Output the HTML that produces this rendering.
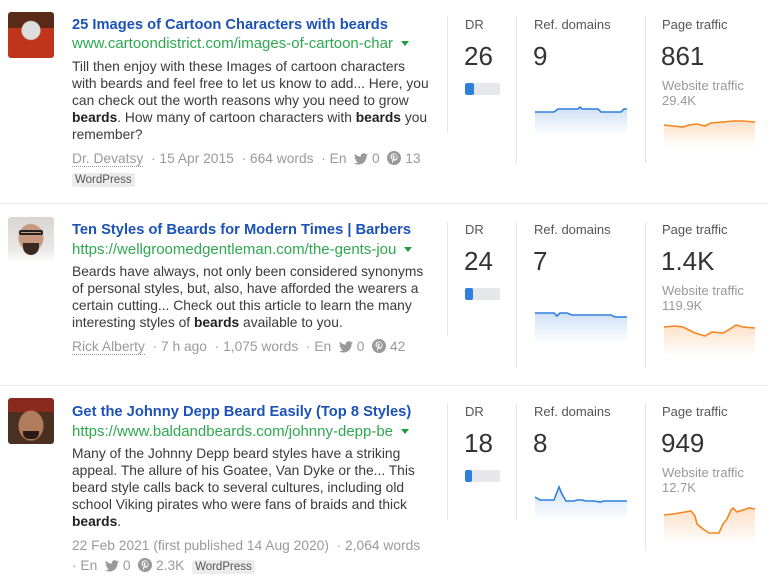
<!DOCTYPE html>
<html><head><meta charset="utf-8">
<style>
*{margin:0;padding:0;box-sizing:border-box}
body{width:768px;height:582px;background:#fff;position:relative;overflow:hidden;font-family:"Liberation Sans",Arial,sans-serif;color:#333}
.a{position:absolute;white-space:nowrap}
.t{font-size:14.7px;font-weight:bold;color:#1d53b6}
.u{font-size:15px;color:#2ea84f}
.u i{display:inline-block;width:0;height:0;border-left:4px solid transparent;border-right:4px solid transparent;border-top:5px solid #1f9a40;margin-left:8px;vertical-align:2px}
.p{font-size:13.8px;line-height:17px;color:#3a3a3a}
.p b{color:#222}
.m{font-size:13.8px;color:#9a9a9a}
.m .au{border-bottom:1px dotted #999}
.tag{display:inline-block;background:#ececec;color:#555;font-size:11.5px;padding:1px 3px;border-radius:2px}
.lbl{font-size:13px;color:#555}
.num{font-size:26px;color:#333}
.wt{font-size:13px;color:#999;line-height:15px}
.vl{position:absolute;width:1px;background:#e6e6e6}
.hl{position:absolute;left:0;width:768px;height:1px;background:#e8e8e8}
.bar{position:absolute;width:35px;height:12px;background:#e6e7ea;border-radius:2px;overflow:hidden}
.bar div{width:8px;height:12px;background:#2f7fde;border-radius:2px}
.av{position:absolute;width:46px;height:46px;border-radius:3px;overflow:hidden}
svg.ic{vertical-align:-2px}
</style></head><body>

<svg width="0" height="0" style="position:absolute"><defs><linearGradient id="gb" x1="0" y1="0" x2="0" y2="1"><stop offset="0" stop-color="#cfe0f5"/><stop offset="1" stop-color="#fff"/></linearGradient><linearGradient id="go" x1="0" y1="0" x2="0" y2="1"><stop offset="0" stop-color="#fde0c8"/><stop offset="1" stop-color="#fff"/></linearGradient></defs></svg>

<!-- Row 1 -->
<div class="av" style="left:8px;top:12px;background:radial-gradient(circle at 50% 40%,#ddd 0 9px,transparent 10px),linear-gradient(#5a2a18 0 35%,#c0341c 35% 100%)"></div>
<div class="a t" style="left:72px;top:17px">25 Images of Cartoon Characters with beards</div>
<div class="a u" style="left:72px;top:35px">www.cartoondistrict.com/images-of-cartoon-char<i></i></div>
<div class="a p" style="left:72px;top:58px">Till then enjoy with these Images of cartoon characters<br>with beards and feel free to let us know to add... Here, you<br>can check out the worth reasons why you need to grow<br><b>beards</b>. How many of cartoon characters with <b>beards</b> you<br>remember?</div>
<div class="a m" style="left:72px;top:151px"><span class="au">Dr. Devatsy</span> &nbsp;· 15 Apr 2015 &nbsp;· 664 words &nbsp;· En &nbsp;<svg class="ic" width="14" height="12" viewBox="0 0 24 20"><path fill="#999" d="M24 2.4a10 10 0 0 1-2.8.8A5 5 0 0 0 23.3.4a10 10 0 0 1-3.1 1.2A4.9 4.9 0 0 0 11.8 6 14 14 0 0 1 1.7.9a4.9 4.9 0 0 0 1.5 6.6A4.9 4.9 0 0 1 1 6.9a4.9 4.9 0 0 0 3.9 4.9 5 5 0 0 1-2.2.1 4.9 4.9 0 0 0 4.6 3.4A9.9 9.9 0 0 1 0 17.3 14 14 0 0 0 7.5 19.5c9.1 0 14-7.5 14-14v-.6A10 10 0 0 0 24 2.4z"/></svg> 0 &nbsp;<svg class="ic" width="14" height="14" viewBox="0 0 24 24"><circle cx="12" cy="12" r="12" fill="#999"/><path fill="#fff" d="M12.5 4C7.8 4 6 7.3 6 10c0 1.6.6 3 1.9 3.5.2.1.4 0 .5-.2l.2-.8c.1-.2 0-.3-.1-.5-.4-.5-.6-1.1-.6-1.9 0-2.5 1.8-4.600 4.8-4.6 2.6 0 4 1.6 4 3.7 0 2.8-1.2 5.1-3 5.1-1 0-1.8-.8-1.5-1.9.3-1.2.9-2.6.9-3.5 0-.8-.4-1.5-1.4-1.5-1.1 0-2 1.2-2 2.7 0 1 .3 1.6.3 1.6L8.6 17.7c-.3 1.4 0 3 0 3.2h.2c.1-.1 1.2-1.5 1.6-2.9l.6-2.4c.3.6 1.2 1.1 2.2 1.1 2.9 0 4.8-2.6 4.8-6.1C18 7.9 15.7 4 12.5 4z"/></svg> 13</div>
<div class="a" style="left:72px;top:170px"><span class="tag">WordPress</span></div>

<div class="vl" style="left:447px;top:16px;height:117px"></div>
<div class="vl" style="left:516px;top:16px;height:147px"></div>
<div class="vl" style="left:645px;top:16px;height:147px"></div>
<div class="a lbl" style="left:465px;top:17px">DR</div>
<div class="a num" style="left:464px;top:41px">26</div>
<div class="bar" style="left:465px;top:83px"><div style="width:9px"></div></div>
<div class="a lbl" style="left:534px;top:17px">Ref. domains</div>
<div class="a num" style="left:533px;top:41px">9</div>
<div class="a lbl" style="left:662px;top:17px">Page traffic</div>
<div class="a num" style="left:661px;top:41px">861</div>
<div class="a wt" style="left:662px;top:78px">Website traffic<br>29.4K</div>
<svg class="a" style="left:534px;top:100px" width="94" height="36"><path d="M1 12 L20 12 L24 9 L44 9 L46 7 L48 9 L64 9 L67 12 L87 12 L90 9 L93 9 L93 36 L1 36Z" fill="url(#gb)"/><path d="M1 12 L20 12 L24 9 L44 9 L46 7 L48 9 L64 9 L67 12 L87 12 L90 9 L93 9" fill="none" stroke="#2f7fde" stroke-width="1.6"/></svg>
<svg class="a" style="left:663px;top:112px" width="94" height="36"><path d="M1 13 L10 14 L20 15 L26 13 L34 12 L42 14 L48 11 L60 10 L70 9 L80 9 L92 10 L92 36 L1 36Z" fill="url(#go)"/><path d="M1 13 L10 14 L20 15 L26 13 L34 12 L42 14 L48 11 L60 10 L70 9 L80 9 L92 10" fill="none" stroke="#f5861f" stroke-width="1.6"/></svg>

<div class="hl" style="top:203px"></div>

<!-- Row 2 -->
<div class="av" style="left:8px;top:217px;background:radial-gradient(ellipse at 50% 45%,#c79a80 0 12px,transparent 13px),linear-gradient(#d8d5d2,#eae8e6 70%,#fff)"><div style="position:absolute;left:15px;top:26px;width:16px;height:12px;background:#3a2a22;border-radius:0 0 8px 8px"></div><div style="position:absolute;left:11px;top:13px;width:24px;height:5px;border:2px solid #222;border-radius:2px"></div></div>
<div class="a t" style="left:72px;top:222px">Ten Styles of Beards for Modern Times | Barbers</div>
<div class="a u" style="left:72px;top:241px">https://wellgroomedgentleman.com/the-gents-jou<i></i></div>
<div class="a p" style="left:72px;top:263px">Beards have always, not only been considered synonyms<br>of personal styles, but, also, have afforded the wearers a<br>certain cutting... Check out this article to learn the many<br>interesting styles of <b>beards</b> available to you.</div>
<div class="a m" style="left:72px;top:339px"><span class="au">Rick Alberty</span> &nbsp;· 7 h ago &nbsp;· 1,075 words &nbsp;· En &nbsp;<svg class="ic" width="14" height="12" viewBox="0 0 24 20"><path fill="#999" d="M24 2.4a10 10 0 0 1-2.8.8A5 5 0 0 0 23.3.4a10 10 0 0 1-3.1 1.2A4.9 4.9 0 0 0 11.8 6 14 14 0 0 1 1.7.9a4.9 4.9 0 0 0 1.5 6.6A4.9 4.9 0 0 1 1 6.9a4.9 4.9 0 0 0 3.9 4.9 5 5 0 0 1-2.2.1 4.9 4.9 0 0 0 4.6 3.4A9.9 9.9 0 0 1 0 17.3 14 14 0 0 0 7.5 19.5c9.1 0 14-7.5 14-14v-.6A10 10 0 0 0 24 2.4z"/></svg> 0 &nbsp;<svg class="ic" width="14" height="14" viewBox="0 0 24 24"><circle cx="12" cy="12" r="12" fill="#999"/><path fill="#fff" d="M12.5 4C7.8 4 6 7.3 6 10c0 1.6.6 3 1.9 3.5.2.1.4 0 .5-.2l.2-.8c.1-.2 0-.3-.1-.5-.4-.5-.6-1.1-.6-1.9 0-2.5 1.8-4.6 4.8-4.6 2.6 0 4 1.6 4 3.7 0 2.8-1.2 5.1-3 5.1-1 0-1.8-.8-1.5-1.9.3-1.2.9-2.6.9-3.5 0-.8-.4-1.5-1.4-1.5-1.1 0-2 1.2-2 2.7 0 1 .3 1.6.3 1.6L8.6 17.7c-.3 1.4 0 3 0 3.2h.2c.1-.1 1.2-1.5 1.6-2.9l.6-2.4c.3.6 1.2 1.1 2.2 1.1 2.9 0 4.8-2.6 4.8-6.1C18 7.9 15.7 4 12.5 4z"/></svg> 42</div>

<div class="vl" style="left:447px;top:222px;height:114px"></div>
<div class="vl" style="left:516px;top:222px;height:146px"></div>
<div class="vl" style="left:645px;top:222px;height:146px"></div>
<div class="a lbl" style="left:465px;top:222px">DR</div>
<div class="a num" style="left:464px;top:246px">24</div>
<div class="bar" style="left:465px;top:288px"><div></div></div>
<div class="a lbl" style="left:534px;top:222px">Ref. domains</div>
<div class="a num" style="left:533px;top:246px">7</div>
<div class="a lbl" style="left:662px;top:222px">Page traffic</div>
<div class="a num" style="left:661px;top:246px">1.4K</div>
<div class="a wt" style="left:662px;top:283px">Website traffic<br>119.9K</div>
<svg class="a" style="left:534px;top:308px" width="94" height="36"><path d="M1 5 L20 5 L23 8 L26 5 L33 5 L38 7 L77 7 L81 9 L93 9 L93 36 L1 36Z" fill="url(#gb)"/><path d="M1 5 L20 5 L23 8 L26 5 L33 5 L38 7 L77 7 L81 9 L93 9" fill="none" stroke="#2f7fde" stroke-width="1.6"/></svg>
<svg class="a" style="left:663px;top:320px" width="94" height="36"><path d="M1 7 L12 6 L20 7 L26 10 L32 13 L42 16 L49 12 L60 13 L67 9 L73 5 L80 7 L92 8 L92 36 L1 36Z" fill="url(#go)"/><path d="M1 7 L12 6 L20 7 L26 10 L32 13 L42 16 L49 12 L60 13 L67 9 L73 5 L80 7 L92 8" fill="none" stroke="#f5861f" stroke-width="1.6"/></svg>

<div class="hl" style="top:385px"></div>

<!-- Row 3 -->
<div class="av" style="left:8px;top:398px;background:radial-gradient(ellipse at 50% 60%,#b07c5c 0 12px,transparent 13px),linear-gradient(#8a2a1e 0 30%,#4a3020 30% 100%)"><div style="position:absolute;left:15px;top:33px;width:16px;height:8px;background:#2a1a12;border-radius:0 0 6px 6px"></div></div>
<div class="a t" style="left:72px;top:404px">Get the Johnny Depp Beard Easily (Top 8 Styles)</div>
<div class="a u" style="left:72px;top:423px">https://www.baldandbeards.com/johnny-depp-be<i></i></div>
<div class="a p" style="left:72px;top:445px">Many of the Johnny Depp beard styles have a striking<br>appeal. The allure of his Goatee, Van Dyke or the... This<br>beard style calls back to several cultures, including old<br>school Viking pirates who were fans of braids and thick<br><b>beards</b>.</div>
<div class="a m" style="left:72px;top:538px">22 Feb 2021 (first published 14 Aug 2020) &nbsp;· 2,064 words</div>
<div class="a m" style="left:72px;top:558px">· En &nbsp;<svg class="ic" width="14" height="12" viewBox="0 0 24 20"><path fill="#999" d="M24 2.4a10 10 0 0 1-2.8.8A5 5 0 0 0 23.3.4a10 10 0 0 1-3.1 1.2A4.9 4.9 0 0 0 11.8 6 14 14 0 0 1 1.7.9a4.9 4.9 0 0 0 1.5 6.6A4.9 4.9 0 0 1 1 6.9a4.9 4.9 0 0 0 3.9 4.9 5 5 0 0 1-2.2.1 4.9 4.9 0 0 0 4.6 3.4A9.9 9.9 0 0 1 0 17.3 14 14 0 0 0 7.5 19.5c9.1 0 14-7.5 14-14v-.6A10 10 0 0 0 24 2.4z"/></svg> 0 &nbsp;<svg class="ic" width="14" height="14" viewBox="0 0 24 24"><circle cx="12" cy="12" r="12" fill="#999"/><path fill="#fff" d="M12.5 4C7.8 4 6 7.3 6 10c0 1.6.6 3 1.9 3.5.2.1.4 0 .5-.2l.2-.8c.1-.2 0-.3-.1-.5-.4-.5-.6-1.1-.6-1.9 0-2.5 1.8-4.6 4.8-4.6 2.6 0 4 1.6 4 3.7 0 2.8-1.2 5.1-3 5.1-1 0-1.8-.8-1.5-1.9.3-1.2.9-2.6.9-3.5 0-.8-.4-1.5-1.4-1.5-1.1 0-2 1.2-2 2.7 0 1 .3 1.6.3 1.6L8.6 17.7c-.3 1.4 0 3 0 3.2h.2c.1-.1 1.2-1.5 1.6-2.9l.6-2.4c.3.6 1.2 1.1 2.2 1.1 2.9 0 4.8-2.6 4.8-6.1C18 7.9 15.7 4 12.5 4z"/></svg> 2.3K &nbsp;<span class="tag">WordPress</span></div>

<div class="vl" style="left:447px;top:403px;height:117px"></div>
<div class="vl" style="left:516px;top:403px;height:117px"></div>
<div class="vl" style="left:645px;top:403px;height:147px"></div>
<div class="a lbl" style="left:465px;top:404px">DR</div>
<div class="a num" style="left:464px;top:428px">18</div>
<div class="bar" style="left:465px;top:470px"><div style="width:7px"></div></div>
<div class="a lbl" style="left:534px;top:404px">Ref. domains</div>
<div class="a num" style="left:533px;top:428px">8</div>
<div class="a lbl" style="left:662px;top:404px">Page traffic</div>
<div class="a num" style="left:661px;top:428px">949</div>
<div class="a wt" style="left:662px;top:465px">Website traffic<br>12.7K</div>
<svg class="a" style="left:534px;top:484px" width="94" height="36"><path d="M1 13 L6 16 L20 16 L23 8 L25 3 L28 10 L32 17 L40 17 L43 16 L48 16 L52 17 L60 17 L66 18 L70 17 L93 17 L93 36 L1 36Z" fill="url(#gb)"/><path d="M1 13 L6 16 L20 16 L23 8 L25 3 L28 10 L32 17 L40 17 L43 16 L48 16 L52 17 L60 17 L66 18 L70 17 L93 17" fill="none" stroke="#2f7fde" stroke-width="1.6"/></svg>
<svg class="a" style="left:663px;top:500px" width="94" height="45"><path d="M1 15 L10 14 L16 13 L22 12 L28 11 L32 16 L34 24 L40 29 L46 33 L52 33 L56 33 L60 24 L64 19 L68 10 L70 8 L74 12 L80 10 L86 8 L92 9 L92 45 L1 45Z" fill="url(#go)"/><path d="M1 15 L10 14 L16 13 L22 12 L28 11 L32 16 L34 24 L40 29 L46 33 L52 33 L56 33 L60 24 L64 19 L68 10 L70 8 L74 12 L80 10 L86 8 L92 9" fill="none" stroke="#f5861f" stroke-width="1.6"/></svg>

</body></html>
